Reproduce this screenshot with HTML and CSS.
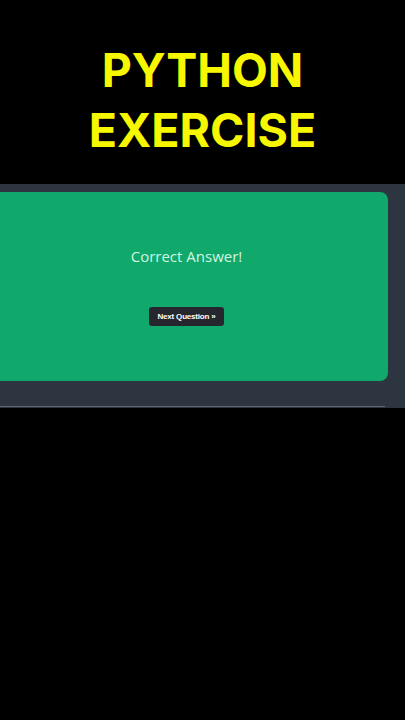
FILE: index.html
```html
<!DOCTYPE html>
<html>
<head>
<meta charset="utf-8">
<link rel="stylesheet" href="styles.css">
</head>
<body>
<div class="page">
  <header class="title">
    <div class="line">PYTHON</div>
    <div class="line">EXERCISE</div>
  </header>
  <section class="panel">
    <div class="card">
      <div class="msg">Correct Answer!</div>
      <button class="next">Next Question »</button>
    </div>
    <div class="rule"></div>
  </section>
</div>
</body>
</html>
```

FILE: styles.css
```css
html, body {
  margin: 0;
  padding: 0;
  background: #000;
}
.page {
  width: 405px;
  height: 720px;
  background: #000;
  overflow: hidden;
}
.title {
  padding-top: 40px;
  height: 184px;
  box-sizing: border-box;
  text-align: center;
  color: #f7f700;
  font-family: Inter, "Liberation Sans", sans-serif;
  font-weight: 700;
  font-size: 46.5px;
  line-height: 60px;
}
.title .line {
  height: 60px;
}
.panel {
  background: #2d3541;
  height: 224px;
  padding-top: 8px;
  box-sizing: border-box;
  display: flex;
  flex-direction: column;
}
.card {
  width: 388px;
  height: 189px;
  background: #10a86b;
  border-radius: 0 8px 8px 0;
  display: flex;
  flex-direction: column;
  align-items: center;
  box-sizing: border-box;
  padding-top: 54px;
  padding-right: 15px;
}
.msg {
  font-family: "Open Sans", "Noto Sans", sans-serif;
  font-size: 15px;
  color: #d3f6e3;
  line-height: 20px;
}
.next {
  margin-top: 41px;
  background: #25262e;
  color: #fff;
  border: none;
  border-radius: 3px;
  font-family: "Liberation Sans", Arial, sans-serif;
  font-weight: 700;
  font-size: 8px;
  letter-spacing: -0.2px;
  height: 19px;
  width: 75px;
  padding: 0;
}
.rule {
  margin-top: auto;
  height: 1px;
  margin-bottom: 1px;
  width: 385px;
  background: #62666e;
}
```
